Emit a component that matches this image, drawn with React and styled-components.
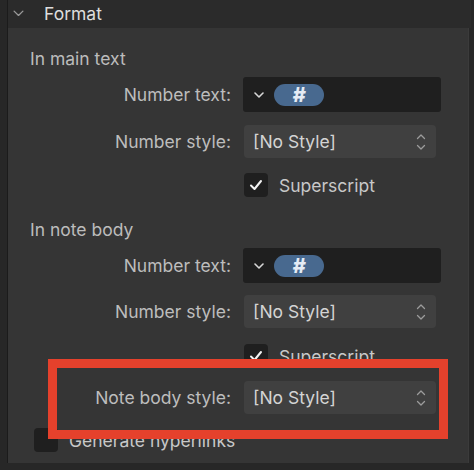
import React from 'react';
import styled, {createGlobalStyle} from 'styled-components';

const GlobalStyle = createGlobalStyle`
  html, body {
    margin: 0;
    padding: 0;
    background: #262626;
  }
  body {
    font-family: Inter, "Noto Sans", "Liberation Sans", sans-serif;
    -webkit-font-smoothing: antialiased;
  }
`

const sections = [
    {
        title: 'In main text',
        titleTop: 20,
        rows: [
            {kind: 'token', label: 'Number text:', top: 7},
            {kind: 'popup', label: 'Number style:', value: '[No Style]', top: 13},
            {kind: 'check', label: 'Superscript', checked: true, top: 15},
        ]
    },
    {
        title: 'In note body',
        titleTop: 22,
        rows: [
            {kind: 'token', label: 'Number text:', top: 7},
            {kind: 'popup', label: 'Number style:', value: '[No Style]', top: 12},
            {kind: 'check', label: 'Superscript', checked: true, top: 16},
            {kind: 'popup', label: 'Note body style:', value: '[No Style]', top: 13},
        ]
    }
]

const ChevronDown = ({size = 10, color = '#d8d8d8', stroke = 1.6}) => (
    <svg width={size} height={size * 0.6} viewBox="0 0 10 6" fill="none">
        <path d="M1 1 L5 5 L9 1" stroke={color} strokeWidth={stroke} strokeLinecap="round" strokeLinejoin="round"/>
    </svg>
)

const UpDown = () => (
    <svg width="10" height="18" viewBox="0 0 10 18" fill="none">
        <path d="M1.5 5.5 L5 2 L8.5 5.5" stroke="#9c9c9c" strokeWidth="1.3" strokeLinecap="round" strokeLinejoin="round"/>
        <path d="M1.5 12.5 L5 16 L8.5 12.5" stroke="#9c9c9c" strokeWidth="1.3" strokeLinecap="round" strokeLinejoin="round"/>
    </svg>
)

const Check = () => (
    <svg width="14" height="12" viewBox="0 0 14 12" fill="none">
        <path d="M2 6.5 L5.5 10 L12 2" stroke="#f2f2f2" strokeWidth="2" strokeLinecap="round" strokeLinejoin="round"/>
    </svg>
)

const Row = ({row}) => {
    if (row.kind === 'check') {
        return (
            <FieldRow $top={row.top}>
                <Label/>
                <CheckBox $checked={row.checked}>{row.checked && <Check/>}</CheckBox>
                <CheckText>{row.label}</CheckText>
            </FieldRow>
        )
    }
    return (
        <FieldRow $top={row.top}>
            <Label>{row.label}</Label>
            {row.kind === 'token' ? (
                <TokenField>
                    <ChevronDown/>
                    <Pill>#</Pill>
                </TokenField>
            ) : (
                <Popup>
                    <span>{row.value}</span>
                    <UpDown/>
                </Popup>
            )}
        </FieldRow>
    )
}

const App = () => {
    return (
        <>
            <GlobalStyle/>
            <Screen>
                <Panel>
                    <Header>
                        <ChevronDown size={11} color="#9a9a9a" stroke={1.2}/>
                        <h3>Format</h3>
                    </Header>
                    <Body>
                        {sections.map((section, index) => (
                            <React.Fragment key={index}>
                                <SectionTitle $top={section.titleTop}>{section.title}</SectionTitle>
                                {section.rows.map((row, i) => <Row key={i} row={row}/>)}
                            </React.Fragment>
                        ))}
                        <PlainCheckRow>
                            <CheckBox/>
                            <CheckText>Generate hyperlinks</CheckText>
                        </PlainCheckRow>
                    </Body>
                </Panel>
                <Highlight/>
            </Screen>
        </>
    );
};

const Screen = styled.div`
  position: relative;
  width: 474px;
  height: 470px;
  overflow: hidden;
  background: #272727;
  padding-left: 7px;
  box-sizing: border-box;
`

const Panel = styled.div`
  width: 461px;
  border-left: 1px solid #1b1b1b;
  display: flex;
  flex-direction: column;
`

const Header = styled.div`
  height: 28px;
  width: 463px;
  background: #2b2b2b;
  display: flex;
  align-items: center;
  padding-left: 5px;
  box-sizing: border-box;
  gap: 20px;

  svg {
    margin-top: -2px;
  }

  h3 {
    margin: 0;
    font-size: 17.5px;
    font-weight: 400;
    color: #dedede;
    margin-top: -2px;
  }
`

const Body = styled.div`
  height: 435px;
  background: #353535;
  border-right: 1px solid #3b3b3b;
  box-sizing: border-box;
  display: flex;
  flex-direction: column;
`

const SectionTitle = styled.div`
  margin-top: ${props => props.$top}px;
  height: 22px;
  line-height: 22px;
  padding-left: 22px;
  font-size: 17.5px;
  color: #bcbcbc;
`

const FieldRow = styled.div`
  margin-top: ${props => props.$top}px;
  display: flex;
  align-items: center;
`

const Label = styled.div`
  width: 223px;
  flex: none;
  margin-right: 13px;
  text-align: right;
  font-size: 17.5px;
  color: #bdbdbd;
`

const TokenField = styled.div`
  width: 198px;
  height: 35px;
  margin-left: -1px;
  background: #1f1f1f;
  border-radius: 3px;
  display: flex;
  align-items: center;
  padding-left: 11px;
  box-sizing: border-box;
  gap: 10px;
`

const Pill = styled.div`
  width: 50px;
  height: 22px;
  border-radius: 11px;
  background: #48698f;
  color: #e4ebf4;
  font-size: 20px;
  font-weight: 800;
  font-style: italic;
  display: flex;
  align-items: center;
  justify-content: center;
  line-height: 1;
`

const Popup = styled.div`
  width: 192px;
  height: 33px;
  background: #404040;
  border-radius: 4px;
  display: flex;
  align-items: center;
  justify-content: space-between;
  padding: 0 10px 0 9px;
  box-sizing: border-box;
  font-size: 17.5px;
  color: #d4d4d4;
`

const CheckBox = styled.div`
  width: 24px;
  height: 24px;
  flex: none;
  border-radius: 4px;
  background: #1f1f1f;
  display: flex;
  align-items: center;
  justify-content: center;
`

const CheckText = styled.span`
  margin-left: 11px;
  font-size: 17.5px;
  color: #c8c8c8;
`

const PlainCheckRow = styled.div`
  margin-top: 14px;
  padding-left: 26px;
  display: flex;
  align-items: center;
`

const Highlight = styled.div`
  position: absolute;
  left: 48px;
  top: 359px;
  width: 400px;
  height: 80px;
  border: 9px solid #e5412c;
  box-sizing: border-box;
`

export default App;
